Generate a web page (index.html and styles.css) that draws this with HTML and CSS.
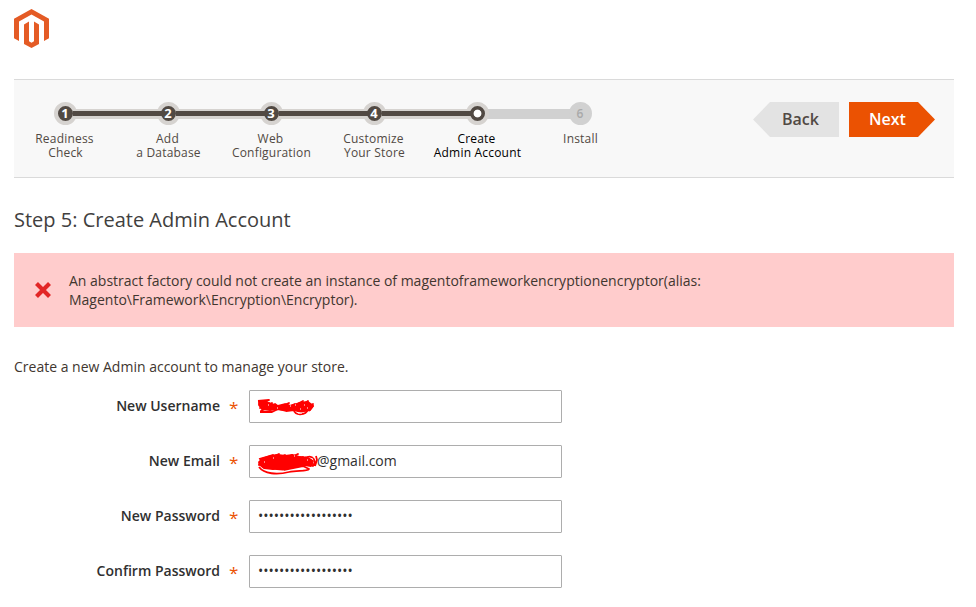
FILE: index.html
```
<!DOCTYPE html>
<html lang="en">
<head>
    <meta charset="UTF-8">
    <meta name="viewport" content="width=device-width, initial-scale=1.0">
    <title>Magento Installation</title>
    <link rel="stylesheet" href="styles.css">
</head>
<body>

<header class="header">
    <svg class="logo" width="35" height="40" viewBox="0 0 35 41" preserveAspectRatio="none" role="img" aria-label="Magento">
        <path fill="#e45b25" d="M17.5 0 35 10v20l-5 2.9V12.9L17.5 5.7 5 12.9v20L0 30V10z"/>
        <path fill="#e45b25" d="M10 15.8l5-3V33l2.5 1.5L20 33V12.8l5 3v20L17.5 40 10 35.8z"/>
    </svg>
</header>

<nav class="nav-bar">
    <ol class="steps">
        <li class="step done"><span class="dot">1</span><span class="step-name">Readiness<br>Check</span></li>
        <li class="step done"><span class="dot">2</span><span class="step-name">Add<br>a Database</span></li>
        <li class="step done"><span class="dot">3</span><span class="step-name">Web<br>Configuration</span></li>
        <li class="step done"><span class="dot">4</span><span class="step-name">Customize<br>Your Store</span></li>
        <li class="step active"><span class="dot"></span><span class="step-name">Create<br>Admin Account</span></li>
        <li class="step"><span class="dot">6</span><span class="step-name">Install</span></li>
    </ol>
    <div class="nav-buttons">
        <button type="button" class="btn btn-back">Back</button>
        <button type="button" class="btn btn-next">Next</button>
    </div>
</nav>

<main>
    <h1>Step 5: Create Admin Account</h1>

    <div class="message">
        <svg class="message-icon" width="16" height="16" viewBox="0 0 16 16">
            <path d="M1.5 1.5l13 13M14.5 1.5l-13 13" stroke="#e22626" stroke-width="4.2"/>
        </svg>
        <p>An abstract factory could not create an instance of magentoframeworkencryptionencryptor(alias:<br>Magento\Framework\Encryption\Encryptor).</p>
    </div>

    <p class="intro">Create a new Admin account to manage your store.</p>

    <form>
        <div class="form-row">
            <label for="username">New Username</label>
            <div class="field">
                <input type="text" id="username">
                <svg class="scribble" width="66" height="30" viewBox="0 0 66 30">
                    <path class="fill" d="M3 10l6 0 7 2 5 2 8-2 6 2 8-3 9-1 5 4-3 4-6 1-3 1-8-2-7 0-9-1-7 1-8-1-3-4z"/>
                    <path d="M2 9l11-1-8 5 8-2-9 5 12-5-11 8 14-7 4 3 10-4-8 6 14-5-6 5 14-8-5 7 10-7-8 8 13-5-6 6 6-4-4 5M4 20h12l6-3 8 2 8-1c0 6 12 6 14-1"/>
                    <path class="gap" d="M12 13h1M21 16h1M34 14h1M39 13h1M44 17h1M48 13h1M42 21h4M51 16h1"/>
                </svg>
            </div>
        </div>
        <div class="form-row">
            <label for="email">New Email</label>
            <div class="field">
                <input type="text" id="email" class="email" value="@gmail.com">
                <svg class="scribble" width="66" height="30" viewBox="0 0 66 30">
                    <path class="fill" d="M5 12l9-3 8-1 7 1 8-1 7 2 8 1 5 3-2 5-6-1-6 1-8 2-10 0-8 1-9-1-5-4z"/>
                    <path d="M3 12l14-4-14 7 20-8-20 11 26-10-22 12 29-12-22 11 28-12-19 10 24-7-18 6 22-6c6-2 10 4 6 9l-6-5 6 3M3 20c5 7 18 8 30 5 8-2 18 0 20-3l-6-3-20 4-18-3M60 9l1 4-2 6"/>
                    <path class="gap" d="M8 15h1M17 11h1M51 13h1M56 12h1M38 9h1M20 24h8M42 22h5"/>
                </svg>
            </div>
        </div>
        <div class="form-row">
            <label for="password">New Password</label>
            <div class="field"><input type="password" id="password" value="abcdefghijklmnopqr"></div>
        </div>
        <div class="form-row">
            <label for="confirm">Confirm Password</label>
            <div class="field"><input type="password" id="confirm" value="abcdefghijklmnopqr"></div>
        </div>
    </form>
</main>

</body>
</html>
```
FILE: styles.css
```
* {
    box-sizing: border-box;
}
body {
    margin: 0;
    padding: 0 22px 0 14px;
    font-family: "Open Sans", "Noto Sans", sans-serif;
    font-size: 14px;
    line-height: 19px;
    color: #41362f;
    background: #fff;
    overflow: hidden;
}
.header {
    height: 79px;
    padding-top: 9px;
}
.logo {
    display: block;
}
.nav-bar {
    display: flex;
    justify-content: space-between;
    height: 99px;
    padding: 22px 19px 0 0;
    background: #f8f8f8;
    border-top: 1px solid #dadada;
    border-bottom: 1px solid #dadada;
}
.steps {
    display: flex;
    margin: 0 0 0 -0.5px;
    padding: 0;
    list-style: none;
}
.step {
    position: relative;
    display: flex;
    flex-direction: column;
    align-items: center;
    width: 103px;
    font-size: 12px;
    line-height: 14px;
    letter-spacing: 0.2px;
    color: #514943;
}
/* connector to the previous step */
.step + .step::before {
    content: "";
    position: absolute;
    top: 7px;
    right: 51px;
    width: 103px;
    height: 10px;
    background: #d1d1d1;
}
.step.done + .step::before {
    background: #d6d3d0;
}
/* dark track, runs over the rings */
.step.done + .step::after {
    content: "";
    position: absolute;
    z-index: 2;
    top: 9px;
    right: 58px;
    width: 89px;
    height: 5px;
    background: #514943;
}
.dot {
    position: relative;
    z-index: 1;
    width: 23px;
    height: 23px;
    margin-bottom: 7px;
    border: 4px solid #d6d3d0;
    border-radius: 50%;
    background: #d6d3d0;
    color: #a9a9a9;
    font-weight: 600;
    line-height: 15px;
    letter-spacing: 0;
    text-align: center;
}
.step:last-child .dot {
    background: #d1d1d1;
    border-color: #d1d1d1;
}
.done .dot {
    background: #514943;
    color: #fff;
    font-size: 13px;
    font-weight: 700;
}
.active .dot {
    background: radial-gradient(circle, #fff 3.5px, #514943 4.3px);
}
.active {
    color: #000;
}
.step-name {
    padding-left: 1px;
    text-align: center;
    text-indent: -2px;
    white-space: nowrap;
}
.step:last-child .step-name {
    text-indent: 0;
}
.nav-buttons {
    display: flex;
    gap: 10px;
}
.btn {
    height: 35px;
    padding: 0;
    border: none;
    font: 600 16px/35px "Open Sans", sans-serif;
    cursor: pointer;
}
.btn-back {
    width: 86px;
    padding-left: 9px;
    background: #e3e3e3;
    color: #514943;
    clip-path: polygon(0 50%, 17px 0, 100% 0, 100% 100%, 17px 100%);
}
.btn-next {
    width: 86px;
    padding-right: 9px;
    background: #eb5202;
    color: #fff;
    clip-path: polygon(0 0, 69px 0, 100% 50%, 69px 100%, 0 100%);
}
h1 {
    margin: 28px 0 19px;
    font-size: 20px;
    font-weight: 400;
    line-height: 28px;
    color: #41403e;
}
.message {
    display: flex;
    align-items: center;
    gap: 18px;
    height: 74px;
    padding-left: 21px;
    background: #fcc;
}
.message-icon {
    flex: none;
    margin-bottom: 1px;
}
.message p {
    margin: 0;
}
.intro {
    margin: 30px 0 14px;
}
.form-row {
    display: flex;
    align-items: center;
    height: 33px;
    margin-bottom: 22px;
}
label {
    display: flex;
    justify-content: flex-end;
    width: 235px;
    padding: 0 11px 2px 0;
    font-weight: 600;
    color: #303030;
}
label::after {
    content: "*";
    width: 9px;
    margin-left: 9px;
    color: #eb5202;
    font-size: 17px;
    font-weight: 400;
    line-height: 23px;
    height: 19px;
}
.field {
    position: relative;
}
input {
    display: block;
    width: 313px;
    height: 33px;
    padding: 0 8px 2px;
    border: 1px solid #adadad;
    border-radius: 1px;
    font: 14px "Open Sans", sans-serif;
    color: #303030;
}
input.email {
    padding-left: 67px;
}
.scribble {
    position: absolute;
    left: 7px;
    top: 2px;
    fill: none;
    stroke: #f00;
    stroke-width: 1.8;
    stroke-linejoin: round;
}
.scribble .fill {
    fill: #f00;
}
.scribble .gap {
    stroke: #fff;
    stroke-width: 1;
}
```
